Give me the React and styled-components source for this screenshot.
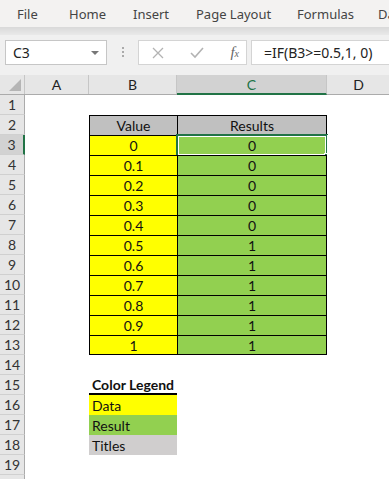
import React from "react";
import styled, { createGlobalStyle } from "styled-components";

const GlobalStyle = createGlobalStyle`
  html, body {
    margin: 0;
    padding: 0;
    background: #ffffff;
  }
  body {
    font-family: "Lato", "Liberation Sans", sans-serif;
  }
`;

const COLUMNS = "25px 64px 88px 150px 64px";
const GREEN = "#217346";

const menu = [
  { label: "File", width: 52 },
  { label: "Home", width: 64 },
  { label: "Insert", width: 63 },
  { label: "Page Layout", width: 101 },
  { label: "Formulas", width: 81 },
  { label: "Data", width: 60 },
];

const values = [0, 0.1, 0.2, 0.3, 0.4, 0.5, 0.6, 0.7, 0.8, 0.9, 1];
const legend = [
  { label: "Data", fill: "#ffff00" },
  { label: "Result", fill: "#92d050" },
  { label: "Titles", fill: "#d0cece" },
];

export default function App() {
  const rows = [];
  for (let r = 1; r <= 20; r++) {
    rows.push(renderRow(r));
  }

  return (
    <Window>
      <GlobalStyle />
      <MenuBar>
        {menu.map((item) => (
          <MenuItem key={item.label} $width={item.width}>
            {item.label}
          </MenuItem>
        ))}
      </MenuBar>
      <MenuShadow />
      <FormulaBar>
        <NameBox>
          <span>C3</span>
          <Caret />
        </NameBox>
        <Dots>
          <i />
          <i />
          <i />
        </Dots>
        <FuncBox>
          <svg width="12" height="12" viewBox="0 0 12 12">
            <path d="M1 1 L11 11 M11 1 L1 11" stroke="#b3b3b3" strokeWidth="1.3" />
          </svg>
          <svg width="14" height="12" viewBox="0 0 14 12">
            <path d="M1 6 L5 10 L13 1" stroke="#b3b3b3" strokeWidth="1.6" fill="none" />
          </svg>
          <Fx>
            f<sub>x</sub>
          </Fx>
        </FuncBox>
        <FormulaInput>=IF(B3&gt;=0.5,1, 0)</FormulaInput>
      </FormulaBar>
      <ColumnHeaders>
        <Corner>
          <svg width="12" height="12" viewBox="0 0 12 12">
            <path d="M12 0 L12 12 L0 12 Z" fill="#b5b5b5" />
          </svg>
        </Corner>
        <ColHead>A</ColHead>
        <ColHead>B</ColHead>
        <ColHead $active>C</ColHead>
        <ColHead>D</ColHead>
      </ColumnHeaders>
      <Sheet>{rows}</Sheet>
    </Window>
  );
}

function renderRow(r) {
  const cells = [
    <RowHead key="h" $active={r === 3}>
      {r}
    </RowHead>,
    <Cell key="a" />,
  ];

  if (r === 2) {
    cells.push(
      <Cell key="b" $fill="#c0c0c0" $boxed $center>
        Value
      </Cell>,
      <Cell key="c" $fill="#c0c0c0" $boxed $right $center>
        Results
      </Cell>
    );
  } else if (r >= 3 && r <= 13) {
    const v = values[r - 3];
    cells.push(
      <Cell key="b" $fill="#ffff00" $boxed $bottom={r === 13} $center>
        {v}
      </Cell>,
      <Cell key="c" $fill="#92d050" $boxed $right $bottom={r === 13} $center>
        {v >= 0.5 ? 1 : 0}
        {r === 3 && (
          <>
            <Selection />
            <FillHandle />
          </>
        )}
      </Cell>
    );
  } else if (r === 15) {
    cells.push(
      <LegendTitle key="b">Color Legend</LegendTitle>,
      <Cell key="c" />
    );
  } else if (r >= 16 && r <= 18) {
    const item = legend[r - 16];
    cells.push(
      <Cell key="b" $fill={item.fill}>
        {item.label}
      </Cell>,
      <Cell key="c" />
    );
  } else {
    cells.push(<Cell key="b" />, <Cell key="c" />);
  }

  cells.push(<Cell key="d" />);
  return <React.Fragment key={r}>{cells}</React.Fragment>;
}

const Window = styled.div`
  width: 389px;
  height: 479px;
  overflow: hidden;
  background: #ffffff;
`;

const MenuBar = styled.div`
  display: flex;
  align-items: center;
  height: 27px;
  padding-left: 17px;
  background: #f3f2f1;
  white-space: nowrap;
  overflow: hidden;
`;

const MenuItem = styled.span`
  flex: 0 0 ${(p) => p.$width}px;
  font-family: "Noto Sans", "Open Sans", sans-serif;
  font-size: 13px;
  color: #444444;
`;

const MenuShadow = styled.div`
  height: 8px;
  background: linear-gradient(#d9d9d9, #e9e9e9);
`;

const FormulaBar = styled.div`
  display: flex;
  align-items: flex-start;
  height: 40px;
  box-sizing: border-box;
  padding: 5px 0 0 5px;
  background: #f0f0f0;
`;

const NameBox = styled.div`
  display: flex;
  align-items: center;
  justify-content: space-between;
  box-sizing: border-box;
  width: 102px;
  height: 25px;
  padding: 0 7px 0 7px;
  background: #ffffff;
  border: 1px solid #c6c6c6;
  font-family: "Noto Sans", "Open Sans", sans-serif;
  font-size: 14px;
  color: #222222;
`;

const Caret = styled.span`
  width: 0;
  height: 0;
  border-left: 4px solid transparent;
  border-right: 4px solid transparent;
  border-top: 4px solid #777777;
`;

const Dots = styled.div`
  display: flex;
  flex-direction: column;
  gap: 2px;
  width: 31px;
  align-items: center;
  padding-top: 7px;

  i {
    display: block;
    width: 2px;
    height: 2px;
    background: #aaaaaa;
  }
`;

const FuncBox = styled.div`
  display: flex;
  align-items: center;
  justify-content: space-between;
  box-sizing: border-box;
  width: 109px;
  height: 25px;
  padding: 0 7px 0 13px;
  background: #ffffff;
  border: 1px solid #d4d4d4;
`;

const Fx = styled.span`
  font-family: "Liberation Serif", serif;
  font-style: italic;
  font-size: 15px;
  color: #666666;

  sub {
    font-size: 10px;
    vertical-align: 0;
  }
`;

const FormulaInput = styled.div`
  display: flex;
  align-items: center;
  flex: 1;
  box-sizing: border-box;
  height: 25px;
  margin-left: 4px;
  padding-left: 12px;
  background: #ffffff;
  border: 1px solid #d4d4d4;
  border-right: none;
  font-family: "Noto Sans", "Open Sans", sans-serif;
  font-size: 14px;
  color: #222222;
  white-space: nowrap;
`;

const ColumnHeaders = styled.div`
  display: grid;
  grid-template-columns: ${COLUMNS};
  height: 19px;
  background: #e6e6e6;
  border-bottom: 1px solid #ababab;
`;

const Corner = styled.div`
  display: flex;
  align-items: flex-end;
  justify-content: flex-end;
  padding: 0 3px 3px 0;
  border-right: 1px solid #c6c6c6;
`;

const ColHead = styled.div`
  display: flex;
  align-items: center;
  justify-content: center;
  box-sizing: border-box;
  border-right: 1px solid #c6c6c6;
  font-size: 14px;
  color: ${(p) => (p.$active ? GREEN : "#222222")};
  background: ${(p) => (p.$active ? "#d2d2d2" : "transparent")};
  border-bottom: ${(p) => (p.$active ? `2px solid ${GREEN}` : "none")};
  margin-bottom: ${(p) => (p.$active ? "-1px" : "0")};
`;

const Sheet = styled.div`
  display: grid;
  grid-template-columns: ${COLUMNS};
  grid-auto-rows: 20px;
`;

const RowHead = styled.div`
  display: flex;
  align-items: center;
  justify-content: center;
  box-sizing: border-box;
  background: ${(p) => (p.$active ? "#d2d2d2" : "#e6e6e6")};
  border-bottom: 1px solid #d0d0d0;
  border-right: ${(p) => (p.$active ? `2px solid ${GREEN}` : "1px solid #ababab")};
  font-size: 14px;
  color: #333333;
`;

const Cell = styled.div`
  position: relative;
  display: flex;
  align-items: center;
  justify-content: ${(p) => (p.$center ? "center" : "flex-start")};
  box-sizing: border-box;
  padding: 0 3px;
  background: ${(p) => p.$fill || "#ffffff"};
  border-left: ${(p) => (p.$boxed ? "1px solid #000" : "none")};
  border-top: ${(p) => (p.$boxed ? "1px solid #000" : "none")};
  border-right: ${(p) => (p.$right ? "1px solid #000" : "none")};
  border-bottom: ${(p) => (p.$bottom ? "1px solid #000" : "none")};
  font-size: 14px;
  color: #111111;
`;

const LegendTitle = styled(Cell)`
  font-weight: 700;
  border-bottom: 2px solid #000000;
`;

const Selection = styled.div`
  position: absolute;
  top: -2px;
  left: -2px;
  right: -2px;
  bottom: -2px;
  border: 2px solid ${GREEN};
  box-shadow: inset 0 0 0 1px #ffffff;
  pointer-events: none;
`;

const FillHandle = styled.div`
  position: absolute;
  right: -5px;
  bottom: -5px;
  width: 5px;
  height: 5px;
  background: ${GREEN};
  border: 1px solid #ffffff;
`;
